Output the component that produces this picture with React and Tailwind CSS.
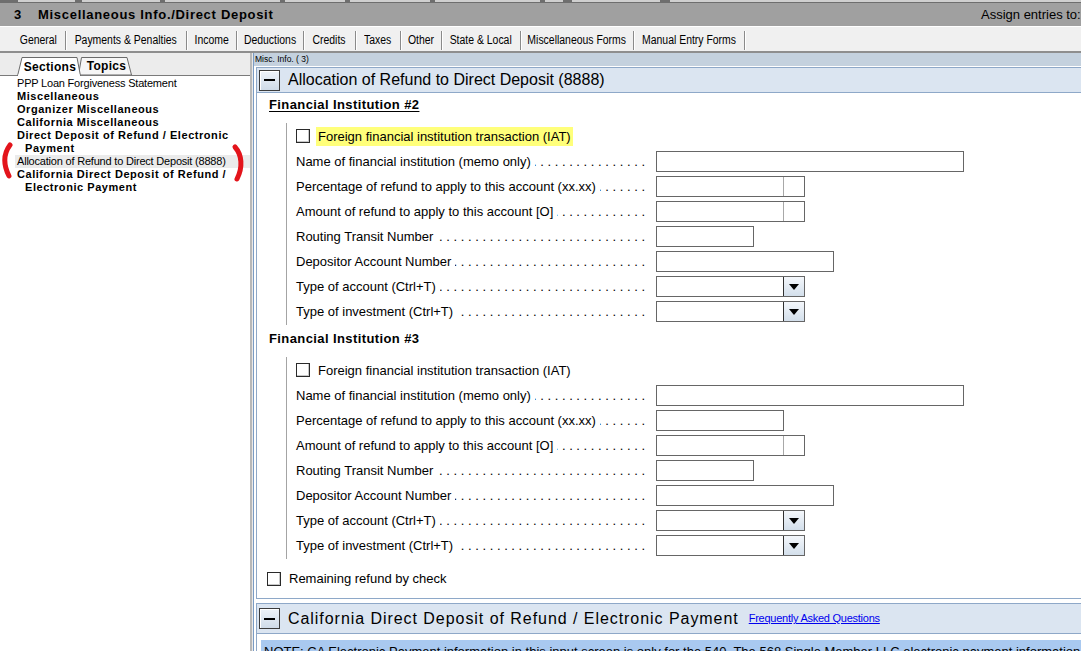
import React from "react";

const navItems = [
  ["General", 53],
  ["Payments & Penalties", 120],
  ["Income", 49],
  ["Deductions", 66],
  ["Credits", 51],
  ["Taxes", 44],
  ["Other", 40],
  ["State & Local", 78],
  ["Miscellaneous Forms", 112],
  ["Manual Entry Forms", 110],
];

const topSegments = [
  [18, 57],
  [82, 78],
  [165, 115],
  [285, 60],
  [350, 80],
  [435, 105],
  [545, 18],
  [572, 88],
  [670, 411],
];

const sectionList = [
  { lines: ["PPP Loan Forgiveness Statement"], bold: false },
  { lines: ["Miscellaneous"], bold: true },
  { lines: ["Organizer Miscellaneous"], bold: true },
  { lines: ["California Miscellaneous"], bold: true },
  { lines: ["Direct Deposit of Refund / Electronic", "Payment"], bold: true },
  { lines: ["Allocation of Refund to Direct Deposit (8888)"], bold: false, selected: true },
  { lines: ["California Direct Deposit of Refund /", "Electronic Payment"], bold: true },
];

const DOTS = ". ".repeat(80);

function Checkbox() {
  return (
    <span className="inline-block w-[14px] h-[14px] shrink-0 bg-white border border-[#2a2a2a] shadow-[inset_-1px_-1px_0_#c8c8c8]" />
  );
}

function DropArrow() {
  return (
    <div className="w-[21px] h-full shrink-0 border-l border-[#303030] bg-[linear-gradient(#f4f7fb,#d3dfeb)] flex items-center justify-center">
      <svg width="10" height="6" viewBox="0 0 10 6">
        <polygon points="0,0 10,0 5,6" fill="#000" />
      </svg>
    </div>
  );
}

function Field({ kind, w }) {
  const base = "h-[21px] bg-white border border-[#666] flex";
  if (kind === "split") {
    return (
      <div className={base} style={{ width: w }}>
        <div className="w-[127px] h-full border-r border-[#a8a8a8]" />
      </div>
    );
  }
  if (kind === "select") {
    return (
      <div className={base} style={{ width: w }}>
        <div className="flex-1" />
        <DropArrow />
      </div>
    );
  }
  return <div className={base} style={{ width: w }} />;
}

function FieldRow({ label, kind, w }) {
  return (
    <div className="h-[25px] flex items-center">
      <div className="w-[354px] flex items-center text-[13px] leading-[15px] pr-[5px]">
        <span className="whitespace-nowrap">{label}</span>
        <div className="flex-1 flex justify-end overflow-hidden ml-[4px]">
          <span className="whitespace-nowrap shrink-0">{DOTS}</span>
        </div>
      </div>
      <div className="ml-[6px]">
        <Field kind={kind} w={w} />
      </div>
    </div>
  );
}

function Institution({ title, underline, highlight, pctKind, pctW }) {
  const rows = [
    ["Name of financial institution (memo only)", "text", 308],
    ["Percentage of refund to apply to this account (xx.xx)", pctKind, pctW],
    ["Amount of refund to apply to this account [O]", "split", 149],
    ["Routing Transit Number", "text", 98],
    ["Depositor Account Number", "text", 178],
    ["Type of account (Ctrl+T)", "select", 149],
    ["Type of investment (Ctrl+T)", "select", 149],
  ];
  return (
    <div>
      <div
        className={
          "h-[16px] leading-[16px] text-[13px] font-bold tracking-[0.4px] pl-[1px] " +
          (underline ? "underline underline-offset-[2px]" : "")
        }
      >
        {title}
      </div>
      <div className="ml-[18px] mt-[10px] border-l border-[#a4a4a4] pl-[9px] pb-[1px]">
        <div className="h-[26px] flex items-center">
          <Checkbox />
          <span
            className={
              "ml-[6px] px-[2px] h-[19px] leading-[19px] text-[13px] whitespace-nowrap " +
              (highlight ? "bg-[#ffff7a]" : "")
            }
          >
            Foreign financial institution transaction (IAT)
          </span>
        </div>
        {rows.map(([l, k, w]) => (
          <FieldRow key={l} label={l} kind={k} w={w} />
        ))}
      </div>
    </div>
  );
}

function MinusButton() {
  return (
    <div className="w-[21px] h-[21px] shrink-0 border border-[#3c3c3c] bg-[linear-gradient(#eef3f9,#cfdbe8)] shadow-[inset_1px_1px_0_#ffffff] flex items-center justify-center">
      <div className="w-[11px] h-[2px] bg-black" />
    </div>
  );
}

export default function App() {
  return (
    <div className="w-[1081px] h-[651px] overflow-hidden bg-white flex flex-col text-black font-['Liberation_Sans',Arial,sans-serif]">
      {/* strip of window buttons above */}
      <div className="h-[3px] shrink-0 bg-[#6e6e6e] flex">
        {topSegments.map(([x, w], i) => (
          <div
            key={i}
            className="h-[2px] bg-[#cfcfcf]"
            style={{ marginLeft: i === 0 ? x : x - (topSegments[i - 1][0] + topSegments[i - 1][1]), width: w }}
          />
        ))}
      </div>

      {/* title bar */}
      <div className="h-[23px] shrink-0 bg-[#a0a0a0] flex items-center overflow-hidden">
        <div className="w-[981px] shrink-0 flex items-center text-[13px] font-bold tracking-[0.7px]">
          <span className="ml-[14px] w-[24px]">3</span>
          <span>Miscellaneous Info./Direct Deposit</span>
        </div>
        <span className="whitespace-nowrap text-[13px]">Assign entries to:</span>
      </div>

      {/* category nav */}
      <div className="h-[27px] shrink-0 bg-[#f0f0f0] border-t border-white border-b-2 border-b-[#8e8e8e] flex items-center pl-[12px] pt-[2px]">
        {navItems.map(([t, w]) => (
          <React.Fragment key={t}>
            <div className="flex justify-center whitespace-nowrap" style={{ width: w }}>
              <span className="inline-block text-[12px] scale-x-[0.87]">{t}</span>
            </div>
            <div className="w-px h-[19px] bg-[#8a8a8a] shadow-[1px_0_0_#ffffff]" />
          </React.Fragment>
        ))}
      </div>

      <div className="flex-1 flex min-h-0">
        {/* left: sections tree */}
        <div className="w-[252px] shrink-0 flex flex-col border-r-2 border-[#b9b9b9] relative">
          <div className="h-[23px] shrink-0 bg-[#ececec] flex items-end border-b border-[#7a7a7a]">
            <div className="relative z-10 ml-[17px] w-[64px] h-[19px] -mb-px flex items-center justify-center">
              <svg className="absolute inset-0" width="64" height="19" viewBox="0 0 64 19">
                <polygon points="0.5,19 5,0.5 60,0.5 63.5,19" fill="#ffffff" stroke="#6a6a6a" />
                <line x1="1" y1="18.5" x2="63" y2="18.5" stroke="#ffffff" strokeWidth="2" />
              </svg>
              <span className="relative text-[12px] font-bold tracking-[0.3px] pl-[2px]">Sections</span>
            </div>
            <div className="relative -ml-[3px] w-[54px] h-[18px] flex items-center justify-center">
              <svg className="absolute inset-0" width="54" height="18" viewBox="0 0 54 18">
                <polygon points="0.5,18 3.5,0.5 49,0.5 53.5,18" fill="#f6f6f6" stroke="#6a6a6a" />
              </svg>
              <span className="relative text-[12px] font-bold tracking-[0.3px] pl-[3px]">Topics</span>
            </div>
          </div>
          <div className="pt-[1px]">
            {sectionList.map((s, i) => (
              <div
                key={i}
                className={
                  "text-[11px] leading-[13px] whitespace-nowrap " +
                  (s.selected ? "bg-[#ebebeb] ml-[15px] pl-[2px]" : "pl-[17px]") +
                  (s.bold ? " font-bold tracking-[0.55px]" : " tracking-[-0.2px]")
                }
              >
                {s.lines.map((l, j) => (
                  <div key={j} className={j > 0 ? "pl-[8px]" : ""}>
                    {l}
                  </div>
                ))}
              </div>
            ))}
          </div>
          {/* red bracket marks around the selected entry */}
          <svg className="absolute left-0 top-[89px]" width="252" height="42" viewBox="0 0 252 42">
            <path d="M10,3 C4,11 3,22 9,34" fill="none" stroke="#e3141b" strokeWidth="5" strokeLinecap="round" />
            <path d="M235,5 C242,13 243,25 237,37" fill="none" stroke="#e3141b" strokeWidth="5" strokeLinecap="round" />
          </svg>
        </div>
        <div className="w-px shrink-0 bg-[#e9e9e9]" />

        {/* right: input form */}
        <div className="flex-1 min-w-0 flex flex-col border-l border-[#7b9cc4]">
          <div className="h-[13px] shrink-0 bg-[#c4d1de] text-[8.5px] leading-[13px] pl-[1px] whitespace-nowrap">
            Misc. Info. ( 3)
          </div>
          <div className="flex-1 bg-white pl-[2px] pt-px overflow-hidden">
            {/* section: allocation */}
            <div className="border-t border-l border-b border-[#8ea8c8]">
              <div className="h-[25px] bg-[#dbe5f1] border-b border-[#8ea8c8] flex items-center pl-[2px]">
                <MinusButton />
                <span className="ml-[8px] text-[16px] whitespace-nowrap">Allocation of Refund to Direct Deposit (8888)</span>
              </div>
              <div className="pl-[11px] pt-[4px] pb-[7px]">
                <Institution title="Financial Institution #2" underline highlight pctKind="split" pctW={149} />
                <div className="mt-[6px]">
                  <Institution title="Financial Institution #3" pctKind="text" pctW={128} />
                </div>
                <div className="mt-[8px] h-[24px] flex items-center -ml-px">
                  <Checkbox />
                  <span className="ml-[8px] text-[13px] whitespace-nowrap">Remaining refund by check</span>
                </div>
              </div>
            </div>

            {/* section: california */}
            <div className="mt-[4px] border-t border-l border-[#8ea8c8]">
              <div className="h-[30px] bg-[#dbe5f1] border-b border-[#8ea8c8] flex items-center pl-[2px]">
                <MinusButton />
                <span className="ml-[8px] text-[16px] tracking-[0.95px] whitespace-nowrap">
                  California Direct Deposit of Refund / Electronic Payment
                </span>
                <span className="ml-[10px] text-[11px] tracking-[-0.25px] text-[#0000ee] underline whitespace-nowrap">
                  Frequently Asked Questions
                </span>
              </div>
              <div className="pl-[4px] pt-[6px]">
                <div className="bg-[#a9c9f0] h-[20px] pl-[3px] pt-[2px] text-[13px] whitespace-nowrap">
                  NOTE: CA Electronic Payment information in this input screen is only for the 540. The 568 Single Member LLC electronic payment information
                </div>
              </div>
            </div>
          </div>
        </div>
      </div>
    </div>
  );
}
